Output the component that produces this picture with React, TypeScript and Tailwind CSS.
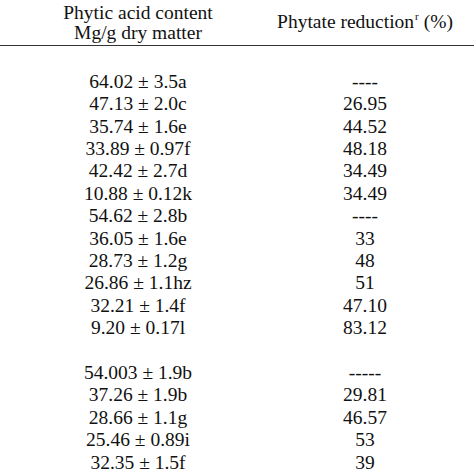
import React from 'react';

const groups: [string, string][][] = [
  [
    ['64.02 ± 3.5a', '----'],
    ['47.13 ± 2.0c', '26.95'],
    ['35.74 ± 1.6e', '44.52'],
    ['33.89 ± 0.97f', '48.18'],
    ['42.42 ± 2.7d', '34.49'],
    ['10.88 ± 0.12k', '34.49'],
    ['54.62 ± 2.8b', '----'],
    ['36.05 ± 1.6e', '33'],
    ['28.73 ± 1.2g', '48'],
    ['26.86 ± 1.1hz', '51'],
    ['32.21 ± 1.4f', '47.10'],
    ['9.20 ± 0.17l', '83.12'],
  ],
  [
    ['54.003 ± 1.9b', '-----'],
    ['37.26 ± 1.9b', '29.81'],
    ['28.66 ± 1.1g', '46.57'],
    ['25.46 ± 0.89i', '53'],
    ['32.35 ± 1.5f', '39'],
  ],
];

export default function App() {
  return (
    <div
      className="w-[474px] h-[474px] overflow-hidden bg-white text-[#111] text-[19.5px]"
      style={{ fontFamily: '"Liberation Serif", "Times New Roman", serif' }}
    >
      {/* Header */}
      <div className="flex h-[46px] border-b-[1.5px] border-[#333]">
        <div className="w-[276px] pt-[3px] flex flex-col items-center leading-[20px]">
          <span>Phytic acid content</span>
          <span>Mg/g dry matter</span>
        </div>
        <div className="w-[178px] flex items-center justify-center leading-[20px] pb-[2px]">
          <span>
            Phytate reduction<sup className="text-[11px] relative -top-[8px] ml-[1px]">r</sup> (%)
          </span>
        </div>
      </div>

      {/* Body */}
      <div className="flex flex-col leading-[22.4px] pt-[2.5px]">
        {groups.map((rows, gi) => (
          <div key={gi} className="flex flex-col pt-[22.4px]">
            {rows.map(([a, b], i) => (
              <div key={i} className="flex h-[22.4px]">
                <div className="w-[276px] text-center">{a}</div>
                <div className="w-[178px] text-center">{b}</div>
              </div>
            ))}
          </div>
        ))}
      </div>
    </div>
  );
}
